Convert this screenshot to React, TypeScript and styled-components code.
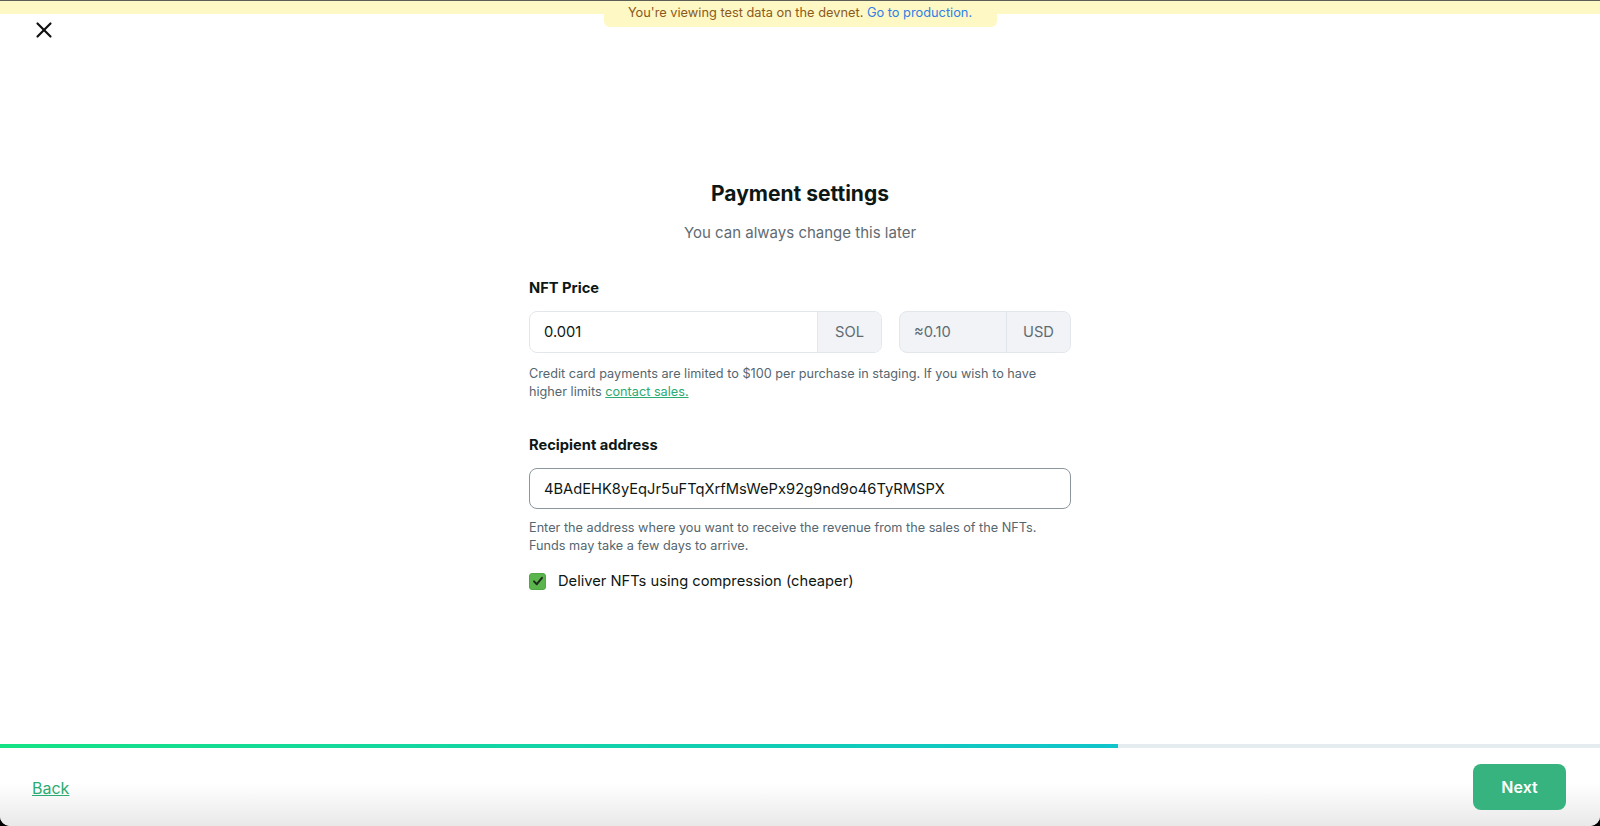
import React, { useState } from 'react';
import styled, { createGlobalStyle } from 'styled-components';
import { X } from 'lucide-react';

const GlobalStyle = createGlobalStyle`
  * { box-sizing: border-box; }
  html, body {
    margin: 0;
    padding: 0;
    background: #000;
    font-family: Inter, "Noto Sans", sans-serif;
    color: #0f1a17;
  }
`;

const Page = styled.div`
  position: relative;
  height: 100vh;
  display: flex;
  flex-direction: column;
  background: #fff;
  border-bottom-left-radius: 10px;
  border-bottom-right-radius: 10px;
  overflow: hidden;
`;

const Banner = styled.div`
  position: absolute;
  top: 0;
  left: 0;
  right: 0;
  display: flex;
  justify-content: center;
  z-index: 5;
`;

const BannerStrip = styled.div`
  position: absolute;
  top: 0;
  left: 0;
  right: 0;
  height: 14px;
  background: #fef8c4;
  border-top: 1px solid #5d5e55;
`;

const BannerTab = styled.div`
  position: relative;
  width: 393px;
  height: 26px;
  margin-top: 1px;
  background: #fef8c4;
  border-radius: 0 0 6px 6px;
  font-size: 12.8px;
  line-height: 24px;
  text-align: center;
  color: #8a5a1c;
`;

const BannerLink = styled.a`
  color: #2f7fe6;
  text-decoration: none;
`;

const Header = styled.header`
  height: 60px;
  display: flex;
  align-items: center;
  padding-left: 31px;
`;

const CloseButton = styled.button`
  background: transparent;
  border: none;
  padding: 0;
  display: flex;
  cursor: pointer;
  color: #111;
`;

const Main = styled.main`
  flex: 1;
  display: flex;
  flex-direction: column;
  align-items: center;
  padding-top: 120px;
`;

const Title = styled.h1`
  margin: 0;
  font-size: 21px;
  line-height: 28px;
  font-weight: 700;
  color: #0d1714;
`;

const Subtitle = styled.p`
  margin: 14px 0 0;
  font-size: 15px;
  line-height: 22px;
  color: #5f6b72;
`;

const Form = styled.div`
  width: 542px;
  margin-top: 33px;
  display: flex;
  flex-direction: column;
`;

const Label = styled.div<{ $top?: number }>`
  margin-top: ${({ $top }) => $top ?? 0}px;
  font-size: 14.7px;
  line-height: 22px;
  font-weight: 700;
  color: #0d1714;
`;

const Row = styled.div`
  margin-top: 12px;
  display: flex;
  gap: 17px;
`;

const Group = styled.div<{ $width: number; $disabled?: boolean }>`
  width: ${({ $width }) => $width}px;
  height: 42px;
  display: flex;
  border: 1px solid #e3e7eb;
  border-radius: 8px;
  overflow: hidden;
  background: ${({ $disabled }) => ($disabled ? '#f1f3f6' : '#fff')};
`;

const Field = styled.input<{ $muted?: boolean }>`
  flex: 1;
  min-width: 0;
  border: none;
  outline: none;
  background: transparent;
  padding: 0 14px;
  font-family: inherit;
  font-size: 14.7px;
  color: ${({ $muted }) => ($muted ? '#5f6b72' : '#0d1714')};
`;

const Addon = styled.div`
  width: 64px;
  display: flex;
  align-items: center;
  justify-content: center;
  background: #f1f3f6;
  border-left: 1px solid #e3e7eb;
  font-size: 14.7px;
  color: #5f6b72;
`;

const Hint = styled.p<{ $top: number }>`
  margin: ${({ $top }) => $top}px 0 0;
  font-size: 12.7px;
  line-height: 17.5px;
  color: #55666f;
`;

const HintLink = styled.a`
  color: #2bab73;
  text-decoration: underline;
`;

const Address = styled.input`
  margin-top: 12px;
  height: 41px;
  border: 1px solid #8c979d;
  border-radius: 8px;
  padding: 0 14px;
  outline: none;
  font-family: inherit;
  font-size: 14.7px;
  color: #0d1714;
`;

const CheckRow = styled.label`
  margin-top: 16px;
  display: flex;
  align-items: center;
  gap: 12px;
  font-size: 14.7px;
  line-height: 22px;
  color: #0d1714;
  cursor: pointer;
`;

const Box = styled.span<{ $checked: boolean }>`
  width: 17px;
  height: 17px;
  border-radius: 3px;
  display: flex;
  align-items: center;
  justify-content: center;
  background: ${({ $checked }) => ($checked ? '#5ab54c' : '#fff')};
  border: 1px solid ${({ $checked }) => ($checked ? '#4fa843' : '#9aa4aa')};
`;

const Progress = styled.div`
  height: 4px;
  background: #e4ecef;
`;

const ProgressFill = styled.div`
  height: 100%;
  background: linear-gradient(to right, #15e285, #10c4cb);
`;

const Footer = styled.footer`
  height: 78px;
  display: flex;
  align-items: center;
  justify-content: space-between;
  padding: 0 34px 0 32px;
  background: linear-gradient(to bottom, #fff 45%, #e9e9e9 100%);
`;

const BackLink = styled.a`
  margin-top: 2px;
  font-size: 16px;
  color: #2bab73;
  text-decoration: underline;
  cursor: pointer;
`;

const NextButton = styled.button`
  width: 93px;
  height: 46px;
  border: none;
  border-radius: 8px;
  background: #36b37e;
  color: #fff;
  font-family: inherit;
  font-size: 16px;
  font-weight: 600;
  cursor: pointer;
`;

export default function App() {
  const [compressed, setCompressed] = useState(true);
  const progress = 69.9;

  return (
    <>
      <GlobalStyle />
      <Page>
        <Banner>
          <BannerStrip />
          <BannerTab>
            You're viewing test data on the devnet. <BannerLink href="#">Go to production.</BannerLink>
          </BannerTab>
        </Banner>

        <Header>
          <CloseButton aria-label="Close">
            <X size={26} strokeWidth={2} />
          </CloseButton>
        </Header>

        <Main>
          <Title>Payment settings</Title>
          <Subtitle>You can always change this later</Subtitle>

          <Form>
            <Label>NFT Price</Label>
            <Row>
              <Group $width={353}>
                <Field defaultValue="0.001" />
                <Addon>SOL</Addon>
              </Group>
              <Group $width={172} $disabled>
                <Field $muted value="≈0.10" readOnly />
                <Addon>USD</Addon>
              </Group>
            </Row>
            <Hint $top={12}>
              Credit card payments are limited to $100 per purchase in staging. If you wish to have
              <br />
              higher limits <HintLink href="#">contact sales.</HintLink>
            </Hint>

            <Label $top={34}>Recipient address</Label>
            <Address defaultValue="4BAdEHK8yEqJr5uFTqXrfMsWePx92g9nd9o46TyRMSPX" />
            <Hint $top={10}>
              Enter the address where you want to receive the revenue from the sales of the NFTs.
              <br />
              Funds may take a few days to arrive.
            </Hint>

            <CheckRow onClick={() => setCompressed(!compressed)}>
              <Box $checked={compressed}>
                {compressed && (
                  <svg width="12" height="12" viewBox="0 0 12 12">
                    <path d="M2 6.4 L4.8 9.2 L10 2.8" fill="none" stroke="#1d2a1d" strokeWidth="2" strokeLinecap="round" strokeLinejoin="round" />
                  </svg>
                )}
              </Box>
              Deliver NFTs using compression (cheaper)
            </CheckRow>
          </Form>
        </Main>

        <Progress>
          <ProgressFill style={{ width: `${progress}%` }} />
        </Progress>

        <Footer>
          <BackLink>Back</BackLink>
          <NextButton>Next</NextButton>
        </Footer>
      </Page>
    </>
  );
}
